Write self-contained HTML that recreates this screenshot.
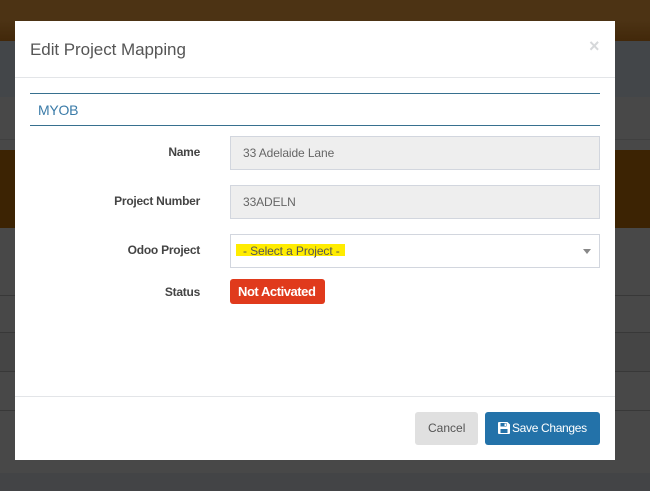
<!DOCTYPE html>
<html><head><meta charset="utf-8"><style>
html,body{margin:0;padding:0}
body{width:650px;height:491px;overflow:hidden;position:relative;background:#484848;font-family:"Liberation Sans",sans-serif}
.a{position:absolute}
.t{position:absolute;white-space:nowrap;line-height:16px}
.l{position:absolute;right:450px;white-space:nowrap;font-size:12px;font-weight:700;color:#444;line-height:16px;letter-spacing:-.25px}
.i{position:absolute;left:230px;width:368px;height:32px;border:1px solid #d2d6de;background:#eee}
</style></head><body>
<div class="a" style="left:0;top:0;width:650px;height:41px;background:linear-gradient(#4c3314 0,#4c3314 50%,#42280a 100%)"></div>
<div class="a" style="left:0;top:41px;width:650px;height:56px;background:#434649"></div>
<div class="a" style="left:0;top:97px;width:650px;height:53px;background:#484848"></div>
<div class="a" style="left:0;top:139px;width:650px;height:1px;background:#404040"></div>
<div class="a" style="left:0;top:150px;width:650px;height:78px;background:#3c2303"></div>
<div class="a" style="left:0;top:295px;width:650px;height:1px;background:#383838"></div>
<div class="a" style="left:0;top:332px;width:650px;height:40px;background:#454545;border-top:1px solid #383838;border-bottom:1px solid #383838;box-sizing:border-box"></div>
<div class="a" style="left:0;top:410px;width:650px;height:1px;background:#383838"></div>
<div class="a" style="left:0;top:473px;width:650px;height:18px;background:#434446"></div>

<div class="a" style="left:15px;top:21px;width:600px;height:439px;background:#fff"></div>
<div class="a" style="left:15px;top:77px;width:600px;height:1px;background:#e3e5e8"></div>
<div class="t" style="left:30px;top:41px;font-size:17px;line-height:18px;color:#555;letter-spacing:-.05px">Edit Project Mapping</div>
<div class="t" style="left:589px;top:37px;font-size:18px;line-height:18px;font-weight:700;color:#d6d8da">×</div>

<div class="a" style="left:30px;top:93px;width:570px;height:1px;background:#37708f"></div>
<div class="a" style="left:30px;top:125px;width:570px;height:1px;background:#37708f"></div>
<div class="t" style="left:38px;top:102px;font-size:14px;color:#3a7ba8;letter-spacing:-.25px">MYOB</div>

<div class="l" style="top:144px">Name</div>
<div class="i" style="top:136px"></div>
<div class="t" style="left:243px;top:145px;font-size:12px;color:#666;letter-spacing:-.1px">33 Adelaide Lane</div>

<div class="l" style="top:193px">Project Number</div>
<div class="i" style="top:185px"></div>
<div class="t" style="left:243px;top:194px;font-size:12px;color:#666;letter-spacing:-.1px">33ADELN</div>

<div class="l" style="top:242px">Odoo Project</div>
<div class="i" style="top:234px;background:#fff"></div>
<div class="a" style="left:236px;top:244px;width:109px;height:12px;background:#ffec00"></div>
<div class="t" style="left:243px;top:243px;font-size:12px;color:#555;letter-spacing:-.1px">- Select a Project -</div>
<div class="a" style="left:583px;top:249px;width:0;height:0;border-left:4px solid transparent;border-right:4px solid transparent;border-top:5px solid #888"></div>

<div class="l" style="top:284px">Status</div>
<div class="a" style="left:230px;top:279px;width:95px;height:25px;background:#e03a1c;border-radius:3px"></div>
<div class="t" style="left:238px;top:284px;font-size:13px;font-weight:700;color:#fff;letter-spacing:-.45px">Not Activated</div>

<div class="a" style="left:15px;top:396px;width:600px;height:1px;background:#e3e5e8"></div>
<div class="a" style="left:415px;top:412px;width:63px;height:33px;background:#e0e0e0;border-radius:3px"></div>
<div class="t" style="left:428px;top:420px;font-size:12px;color:#555">Cancel</div>
<div class="a" style="left:485px;top:412px;width:115px;height:33px;background:#2372a9;border-radius:3px"></div>
<svg class="a" style="left:498px;top:422px" width="12" height="12" viewBox="0 0 12 12"><path fill="#fff" fill-rule="evenodd" d="M1 0H9.5L12 2.5V11a1 1 0 0 1-1 1H1a1 1 0 0 1-1-1V1a1 1 0 0 1 1-1ZM2.5 1V4.5H8.5V1ZM6.5 1.5H8V4H6.5ZM2.5 7V11H9.5V7Z"/></svg>
<div class="t" style="left:512px;top:420px;font-size:12px;color:#fff;letter-spacing:-.33px">Save Changes</div>
</body></html>
